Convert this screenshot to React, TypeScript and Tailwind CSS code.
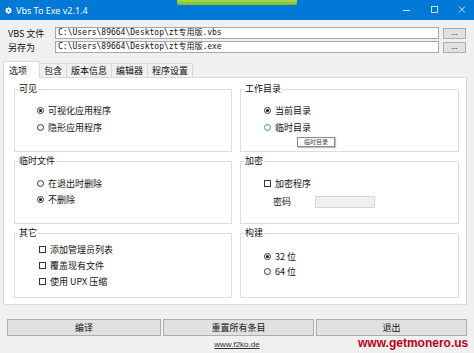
import React from 'react';

const cjk = { fontFamily: '"Noto Sans CJK SC", "Noto Sans", sans-serif' };
const mono = { fontFamily: '"DejaVu Sans Mono", "Noto Sans CJK SC", monospace' };

const Radio = ({ checked, hover, label, h = 'h-[17px]' }: { checked?: boolean; hover?: boolean; label: string; h?: string }) => (
  <div className={`flex items-center gap-[4px] ${h}`}>
    <span
      className={`w-[7px] h-[7px] rounded-full border bg-white flex items-center justify-center ${
        hover ? 'border-[#3c8fdc]' : 'border-[#333333]'
      }`}
    >
      {checked && <span className="w-[3px] h-[3px] rounded-full bg-[#111111]" />}
    </span>
    <span className="text-[9px] leading-none text-[#111111]">{label}</span>
  </div>
);

const Check = ({ label, h = 'h-[16px]' }: { label: string; h?: string }) => (
  <div className={`flex items-center gap-[4px] ${h}`}>
    <span className="w-[7px] h-[7px] border border-[#333333] bg-white" />
    <span className="text-[9px] leading-none text-[#111111]">{label}</span>
  </div>
);

const Group = ({ title, height, className = '', children }: { title: string; height: string; className?: string; children: React.ReactNode }) => (
  <fieldset className={`relative border border-[#dcdcdc] ${height} ${className}`}>
    <legend className="ml-[3px] px-[1px] text-[9px] leading-[12px] text-[#111111]">{title}</legend>
    {children}
  </fieldset>
);

const PathRow = ({ label, value }: { label: string; value: string }) => (
  <div className="flex items-center h-[12px]">
    <span className="w-[55px] pl-[8px] text-[9px] leading-none text-[#111111] whitespace-nowrap">{label}</span>
    <div className="w-[384px] h-[12px] bg-white border border-[#a9a9a9] flex items-center pl-[2px]">
      <span style={mono} className="text-[8px] leading-none text-[#111111] whitespace-nowrap">{value}</span>
    </div>
    <button className="ml-[4px] w-[23px] h-[11px] bg-[#e1e1e1] border border-[#adadad] text-[8px] leading-none text-[#333333] flex items-end justify-center pb-[2px]">
      ...
    </button>
  </div>
);

const tabs = ['选项', '包含', '版本信息', '编辑器', '程序设置'];

export default function App() {
  return (
    <div style={cjk} className="relative w-[474px] h-[353px] bg-[#f0f0f0] overflow-hidden">
      {/* title bar */}
      <div className="h-[20px] bg-[#0078d7] flex items-center text-white">
        <svg className="ml-[5px]" width="7" height="7" viewBox="0 0 10 10">
          <circle cx="5" cy="5" r="3.6" fill="white" />
          <g stroke="white" strokeWidth="1.6">
            <line x1="5" y1="0" x2="5" y2="10" />
            <line x1="0" y1="5" x2="10" y2="5" />
            <line x1="1.5" y1="1.5" x2="8.5" y2="8.5" />
            <line x1="8.5" y1="1.5" x2="1.5" y2="8.5" />
          </g>
          <circle cx="5" cy="5" r="1.3" fill="#0078d7" />
        </svg>
        <span className="ml-[4px] text-[9px] leading-none" style={{ fontFamily: '"Noto Sans", sans-serif' }}>
          Vbs To Exe v2.1.4
        </span>
        <div className="ml-auto flex items-center h-full">
          <svg width="28" height="20" viewBox="0 0 28 20">
            <line x1="9" y1="10.5" x2="16" y2="10.5" stroke="white" strokeWidth="0.8" />
          </svg>
          <svg width="28" height="20" viewBox="0 0 28 20">
            <rect x="9.5" y="6.5" width="6" height="6" fill="none" stroke="white" strokeWidth="0.8" />
          </svg>
          <svg width="24" height="20" viewBox="0 0 24 20">
            <path d="M9 6.5 L15 12.5 M15 6.5 L9 12.5" stroke="white" strokeWidth="0.8" />
          </svg>
        </div>
      </div>
      <div className="absolute left-[177px] top-0 w-[120px] h-[5px] rounded-b-[2px] bg-gradient-to-b from-[#a6d84e] to-[#7dbb2b]" />

      {/* path rows */}
      <div className="pt-[7px] flex flex-col gap-[2px]">
        <PathRow label="VBS 文件" value="C:\Users\89664\Desktop\zt专用版.vbs" />
        <PathRow label="另存为" value="C:\Users\89664\Desktop\zt专用版.exe" />
      </div>

      {/* tabs */}
      <div className="mt-[8px] ml-[3px] flex items-end h-[16px] relative z-10">
        {tabs.map((t, i) =>
          i === 0 ? (
            <div key={t} className="h-[17px] -mb-[1px] w-[37px] pl-[5px] bg-white border border-b-0 border-[#d9d9d9] flex items-center text-[9px] leading-none text-[#111111]">
              {t}
            </div>
          ) : (
            <div key={t} className="h-[14px] px-[4px] border border-b-0 border-l-0 border-[#d9d9d9] bg-[#f0f0f0] flex items-center text-[9px] leading-none text-[#111111]">
              {t}
            </div>
          )
        )}
      </div>

      {/* tab panel */}
      <div className="ml-[3px] w-[464px] h-[228px] bg-white border border-[#d9d9d9] pl-[10px] pt-[5px] flex gap-[8px]">
        <div className="w-[218px] flex flex-col gap-[3px]">
          <Group title="可见" height="h-[69px]">
            <div className="pl-[22px] pt-[7px]">
              <Radio checked label="可视化应用程序" />
              <Radio label="隐形应用程序" />
            </div>
          </Group>
          <Group title="临时文件" height="h-[69px]">
            <div className="pl-[22px] pt-[8px]">
              <Radio label="在退出时删除" h="h-[16px]" />
              <Radio checked label="不删除" h="h-[16px]" />
            </div>
          </Group>
          <Group title="其它" height="h-[71px]">
            <div className="pl-[24px] pt-[2px]">
              <Check label="添加管理员列表" />
              <Check label="覆盖现有文件" />
              <Check label="使用 UPX 压缩" />
            </div>
          </Group>
        </div>
        <div className="w-[219px] flex flex-col gap-[3px]">
          <Group title="工作目录" height="h-[69px]">
            <div className="pl-[23px] pt-[7px]">
              <Radio checked label="当前目录" />
              <Radio hover label="临时目录" />
            </div>
            <div className="absolute left-[56px] top-[42px] w-[38px] h-[10px] bg-white border border-[#8a8a8a] shadow-[1px_1px_1px_rgba(0,0,0,0.25)] flex items-center justify-center text-[6px] leading-none text-[#444444] z-20">
              临时目录
            </div>
          </Group>
          <Group title="加密" height="h-[69px]">
            <div className="pl-[23px] pt-[8px]">
              <Check label="加密程序" />
              <div className="mt-[4px] flex items-center h-[13px]">
                <span className="ml-[9px] w-[42px] text-[9px] leading-none text-[#111111]">密码</span>
                <div className="w-[60px] h-[12px] bg-[#f0f0f0] border border-[#d4d4d4]" />
              </div>
            </div>
          </Group>
          <Group title="构建" height="h-[71px]">
            <div className="pl-[23px] pt-[10px]">
              <Radio checked label="32 位" h="h-[15px]" />
              <Radio label="64 位" h="h-[15px]" />
            </div>
          </Group>
        </div>
      </div>

      {/* buttons */}
      <div className="mt-[14px] ml-[7px] flex gap-[2px]">
        {[
          ['编译', 'w-[154px]'],
          ['重置所有条目', 'w-[151px]'],
          ['退出', 'w-[151px]'],
        ].map(([t, w]) => (
          <button
            key={t}
            className={`${w} h-[17px] bg-[#e1e1e1] border border-[#adadad] flex items-center justify-center text-[9px] leading-none text-[#111111]`}
          >
            {t}
          </button>
        ))}
      </div>

      {/* link */}
      <div className="mt-[5px] flex justify-center">
        <span className="text-[8px] leading-none text-[#333333] underline" style={{ fontFamily: '"Liberation Sans", sans-serif' }}>
          www.f2ko.de
        </span>
      </div>

      <div
        className="absolute left-[358px] top-[337px] text-[12px] font-bold leading-none text-[#c00018]"
        style={{ fontFamily: '"Liberation Sans", Arial, sans-serif' }}
      >
        www.getmonero.us
      </div>
    </div>
  );
}
